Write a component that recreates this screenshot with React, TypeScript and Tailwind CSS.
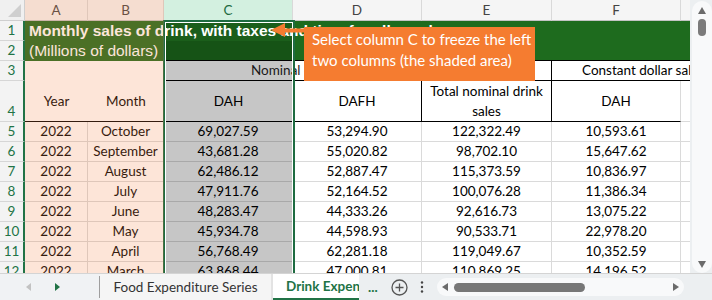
import React from 'react'

const data = [
  ['2022', 'October', '69,027.59', '53,294.90', '122,322.49', '10,593.61'],
  ['2022', 'September', '43,681.28', '55,020.82', '98,702.10', '15,647.62'],
  ['2022', 'August', '62,486.12', '52,887.47', '115,373.59', '10,836.97'],
  ['2022', 'July', '47,911.76', '52,164.52', '100,076.28', '11,386.34'],
  ['2022', 'June', '48,283.47', '44,333.26', '92,616.73', '13,075.22'],
  ['2022', 'May', '45,934.78', '44,598.93', '90,533.71', '22,978.20'],
  ['2022', 'April', '56,768.49', '62,281.18', '119,049.67', '10,352.59'],
  ['2022', 'March', '63,868.44', '47,000.81', '110,869.25', '14,196.52'],
]

function Cell({ c, children }: { c: string; children?: React.ReactNode }) {
  return <div className={`flex items-center justify-center whitespace-nowrap ${c}`}>{children}</div>
}

function RowHead({ n }: { n: number }) {
  return (
    <div className="flex items-end justify-center leading-[20px] bg-[#f3f3f3] text-[#217346] border-b border-b-[#d6d6d6] border-r-2 border-r-[#217346]">
      {n}
    </div>
  )
}

function Sheet() {
  return (
    <div className="relative w-[690px] h-[273px] overflow-hidden">
      <div className="grid grid-cols-[25px_63px_76px_129px_129px_130px_129px_9px] grid-rows-[21px_20px_20px_20px_41px_repeat(8,20px)]">
        {/* column headers */}
        <div className="bg-[#f0f0f0] border-r border-b border-[#cfcfcf] flex items-end justify-end p-[3px]">
          <svg width="13" height="13" viewBox="0 0 13 13">
            <path d="M13 0 L13 13 L0 13 Z" fill="#cfcfcf" />
          </svg>
        </div>
        <Cell c="bg-[#f5f5f5] text-[#444] border-r border-r-[#d9d9d9] border-b border-b-[#c4c4c4]">A</Cell>
        <Cell c="bg-[#f5f5f5] text-[#444] border-r border-r-[#d9d9d9] border-b border-b-[#c4c4c4]">B</Cell>
        <Cell c="bg-[#d3f0e0] text-[#1e6b41] border-r border-r-[#d9d9d9]">C</Cell>
        <Cell c="bg-[#f5f5f5] text-[#444] border-r border-r-[#d9d9d9] border-b border-b-[#c4c4c4]">D</Cell>
        <Cell c="bg-[#f5f5f5] text-[#444] border-r border-r-[#d9d9d9] border-b border-b-[#c4c4c4]">E</Cell>
        <Cell c="bg-[#f5f5f5] text-[#444] border-r border-r-[#d9d9d9] border-b border-b-[#c4c4c4]">F</Cell>
        <Cell c="bg-[#f5f5f5] border-b border-b-[#c4c4c4]"></Cell>

        {/* row 1 */}
        <RowHead n={1} />
        <div className="relative z-10 col-span-2 bg-[#1e6b1e] flex items-center pl-[4px] whitespace-nowrap text-white font-bold text-[15.5px] font-['Liberation_Sans',Arial,sans-serif]">
          Monthly sales of drink, with taxes and tips, for all purchases
        </div>
        <div className="bg-[#1b5e1b]"></div>
        <div className="col-span-4 bg-[#1e6b1e]"></div>

        {/* row 2 */}
        <RowHead n={2} />
        <div className="relative z-10 col-span-2 bg-[#1e6b1e] flex items-center pl-[4px] whitespace-nowrap text-white text-[15.5px] font-['Liberation_Sans',Arial,sans-serif]">
          (Millions of dollars)
        </div>
        <div className="bg-[#165316] border-b border-black"></div>
        <div className="col-span-4 bg-[#1e6b1e] border-b border-black"></div>

        {/* row 3 */}
        <RowHead n={3} />
        <div className="bg-white"></div>
        <div className="bg-white"></div>
        <div className="relative z-10 bg-[#c6c6c6] border-b border-black flex items-center pl-[87px] whitespace-nowrap text-[#1a1a1a]">
          Nominal dollar sales
        </div>
        <div className="bg-white border-b border-black"></div>
        <div className="bg-white border-b border-r border-black"></div>
        <div className="col-span-2 bg-white border-b border-black flex items-center pl-[30px] whitespace-nowrap">
          Constant dollar sales
        </div>

        {/* row 4 */}
        <RowHead n={4} />
        <Cell c="bg-white border-b border-black">Year</Cell>
        <Cell c="bg-white border-b border-black">Month</Cell>
        <Cell c="bg-[#c6c6c6] border-b border-black">DAH</Cell>
        <Cell c="bg-white border-b border-r border-black">DAFH</Cell>
        <Cell c="bg-white border-b border-r border-black leading-[20px] text-center">
          <span>
            Total nominal drink
            <br />
            sales
          </span>
        </Cell>
        <Cell c="bg-white border-b border-b-black border-r border-r-[#dadada]">DAH</Cell>
        <div className="bg-white border-b border-[#dadada]"></div>

        {/* data rows */}
        {data.map((r, i) => (
          <React.Fragment key={i}>
            <RowHead n={i + 5} />
            <Cell c="bg-white border-r border-b border-[#d9d9d9]">{r[0]}</Cell>
            <Cell c="bg-white border-r border-b border-[#d9d9d9]">{r[1]}</Cell>
            <Cell c="bg-[#c6c6c6] border-r border-b border-[#a9a9a9]">{r[2]}</Cell>
            <Cell c="bg-white border-r border-b border-[#dadada]">{r[3]}</Cell>
            <Cell c="bg-white border-r border-b border-[#dadada]">{r[4]}</Cell>
            <Cell c="bg-white border-r border-b border-[#dadada]">{r[5]}</Cell>
            <div className="bg-white border-b border-[#dadada]"></div>
          </React.Fragment>
        ))}
      </div>

      {/* shaded frozen area */}
      <div className="absolute left-[25px] top-0 w-[139px] h-full bg-[rgba(247,133,71,0.21)] z-30 pointer-events-none"></div>

      {/* selected column C */}
      <div className="absolute left-[163px] top-[20px] w-[132px] h-[260px] border-2 border-[#1e6b41] shadow-[inset_0_0_0_1px_#ffffff] z-20 pointer-events-none"></div>

      {/* arrow */}
      <svg className="absolute left-[268px] top-[20px] z-40" width="40" height="22" viewBox="0 0 40 22">
        <path d="M3 10 L17 3 L17 8.5 L38 8.5 L38 12.5 L17 12.5 L17 17 Z" fill="#f57c30" />
      </svg>

      {/* callout */}
      <div className="absolute left-[304px] top-[27px] w-[231px] h-[54px] bg-[#f57c30] text-white text-[15px] leading-[21px] pl-[8px] pt-[2px] z-40 whitespace-nowrap">
        Select column C to freeze the left
        <br />
        two columns (the shaded area)
      </div>
    </div>
  )
}

function VScroll() {
  return (
    <div className="w-[22px] h-[273px] bg-[#eceff1] pl-[2px] pt-[1px]">
      <div className="w-[20px] h-[272px] rounded-t-[10px] rounded-b-[10px] bg-[#f8f9fa] flex flex-col items-center">
        <svg className="mt-[6px]" width="8" height="7" viewBox="0 0 8 7">
          <path d="M4 0 L8 7 L0 7 Z" fill="#6b6b6b" />
        </svg>
        <div className="mt-[5px] w-[8px] h-[17px] rounded-full bg-[#7b7b7b]"></div>
        <div className="flex-1"></div>
        <svg className="mb-[5px]" width="8" height="7" viewBox="0 0 8 7">
          <path d="M0 0 L8 0 L4 7 Z" fill="#6b6b6b" />
        </svg>
      </div>
    </div>
  )
}

function TabBar() {
  return (
    <div className="h-[27px] flex items-stretch bg-[#eceff1] border-t border-[#d4d4d4] text-[13.5px]">
      <div className="w-[99px] flex items-center bg-[#f0f2f4]">
        <svg className="ml-[26px]" width="5" height="8" viewBox="0 0 5 8">
          <path d="M5 0 L5 8 L0 4 Z" fill="#c2c2c2" />
        </svg>
        <svg className="ml-[24px]" width="5" height="8" viewBox="0 0 5 8">
          <path d="M0 0 L5 4 L0 8 Z" fill="#217346" />
        </svg>
      </div>
      <div className="flex items-center bg-[#f0f2f4]">
        <div className="w-px h-[22px] bg-[#9e9e9e]"></div>
      </div>
      <div className="w-[171px] flex items-center justify-center bg-[#f5f5f5] text-[#333]">
        Food Expenditure Series
      </div>
      <div className="w-[2px] bg-[#e3e3e3]"></div>
      <div className="w-[86px] bg-white border-b-2 border-[#217346] overflow-hidden whitespace-nowrap flex items-center pl-[13px] font-bold text-[#217346]">
        Drink Expenditure Series
      </div>
      <div className="flex items-center ml-[9px] font-bold text-[#217346]">...</div>
      <div className="flex items-center ml-[13px]">
        <svg width="17" height="17" viewBox="0 0 17 17">
          <circle cx="8.5" cy="8.5" r="7.5" fill="none" stroke="#555" strokeWidth="1.3" />
          <path d="M8.5 4.5 V12.5 M4.5 8.5 H12.5" stroke="#555" strokeWidth="1.3" />
        </svg>
      </div>
      <div className="flex items-center ml-[12px]">
        <svg width="4" height="12" viewBox="0 0 4 12">
          <circle cx="2" cy="1.5" r="1.2" fill="#444" />
          <circle cx="2" cy="6" r="1.2" fill="#444" />
          <circle cx="2" cy="10.5" r="1.2" fill="#444" />
        </svg>
      </div>
      <div className="flex items-center ml-[13px]">
        <div className="w-[247px] h-[18px] rounded-full bg-[#f8f9fa] flex items-center">
          <svg className="ml-[5px]" width="6" height="8" viewBox="0 0 6 8">
            <path d="M6 0 L6 8 L0 4 Z" fill="#6b6b6b" />
          </svg>
          <div className="ml-[6px] w-[131px] h-[9px] rounded-full bg-[#777777]"></div>
          <div className="flex-1"></div>
          <svg className="mr-[5px]" width="6" height="8" viewBox="0 0 6 8">
            <path d="M0 0 L6 4 L0 8 Z" fill="#6b6b6b" />
          </svg>
        </div>
      </div>
    </div>
  )
}

export default function App() {
  return (
    <div className="w-[712px] h-[300px] overflow-hidden bg-white flex flex-col font-['Lato','Liberation_Sans',sans-serif] text-[13.5px] text-black">
      <div className="flex h-[273px]">
        <Sheet />
        <VScroll />
      </div>
      <TabBar />
    </div>
  )
}
